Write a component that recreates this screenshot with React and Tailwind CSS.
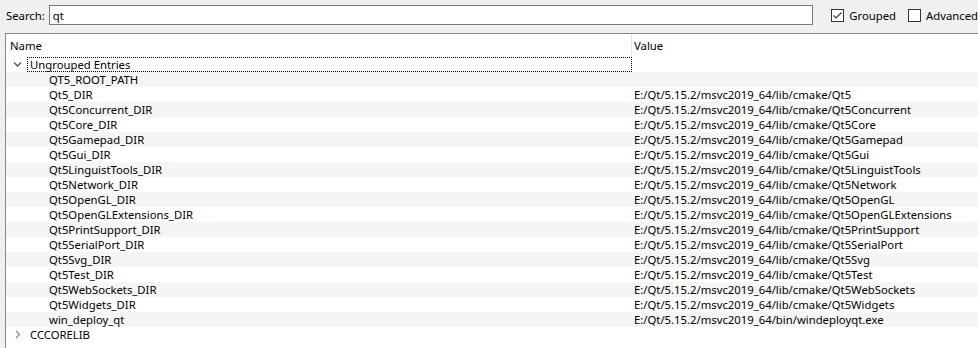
import React from 'react'

const entries = [
  ['QT5_ROOT_PATH', ''],
  ['Qt5_DIR', 'E:/Qt/5.15.2/msvc2019_64/lib/cmake/Qt5'],
  ['Qt5Concurrent_DIR', 'E:/Qt/5.15.2/msvc2019_64/lib/cmake/Qt5Concurrent'],
  ['Qt5Core_DIR', 'E:/Qt/5.15.2/msvc2019_64/lib/cmake/Qt5Core'],
  ['Qt5Gamepad_DIR', 'E:/Qt/5.15.2/msvc2019_64/lib/cmake/Qt5Gamepad'],
  ['Qt5Gui_DIR', 'E:/Qt/5.15.2/msvc2019_64/lib/cmake/Qt5Gui'],
  ['Qt5LinguistTools_DIR', 'E:/Qt/5.15.2/msvc2019_64/lib/cmake/Qt5LinguistTools'],
  ['Qt5Network_DIR', 'E:/Qt/5.15.2/msvc2019_64/lib/cmake/Qt5Network'],
  ['Qt5OpenGL_DIR', 'E:/Qt/5.15.2/msvc2019_64/lib/cmake/Qt5OpenGL'],
  ['Qt5OpenGLExtensions_DIR', 'E:/Qt/5.15.2/msvc2019_64/lib/cmake/Qt5OpenGLExtensions'],
  ['Qt5PrintSupport_DIR', 'E:/Qt/5.15.2/msvc2019_64/lib/cmake/Qt5PrintSupport'],
  ['Qt5SerialPort_DIR', 'E:/Qt/5.15.2/msvc2019_64/lib/cmake/Qt5SerialPort'],
  ['Qt5Svg_DIR', 'E:/Qt/5.15.2/msvc2019_64/lib/cmake/Qt5Svg'],
  ['Qt5Test_DIR', 'E:/Qt/5.15.2/msvc2019_64/lib/cmake/Qt5Test'],
  ['Qt5WebSockets_DIR', 'E:/Qt/5.15.2/msvc2019_64/lib/cmake/Qt5WebSockets'],
  ['Qt5Widgets_DIR', 'E:/Qt/5.15.2/msvc2019_64/lib/cmake/Qt5Widgets'],
  ['win_deploy_qt', 'E:/Qt/5.15.2/msvc2019_64/bin/windeployqt.exe'],
]

function Checkbox({ label, checked }) {
  return (
    <label className="flex items-center">
      <span className="flex h-[13px] w-[13px] items-center justify-center border border-[#333] bg-white">
        {checked && (
          <svg width="11" height="11" viewBox="0 0 11 11">
            <path d="M1.5 5.5 L4 8 L9.5 2.5" fill="none" stroke="#333" strokeWidth="1.1" />
          </svg>
        )}
      </span>
      <span className="ml-[5px]">{label}</span>
    </label>
  )
}

function Chevron({ open }) {
  return (
    <svg width="9" height="9" viewBox="0 0 9 9" className="shrink-0">
      {open ? (
        <path d="M1 2.5 L4.5 6 L8 2.5" fill="none" stroke="#555" strokeWidth="1.3" />
      ) : (
        <path d="M3 1 L6.5 4.5 L3 8" fill="none" stroke="#8a8a8a" strokeWidth="1.2" />
      )}
    </svg>
  )
}

export default function App() {
  return (
    <div className="flex h-[348px] w-[978px] flex-col overflow-hidden bg-[#f0f0f0] text-[11.3px] leading-[15px] text-black [font-family:'Noto_Sans',sans-serif]">
      <div className="flex h-[33px] shrink-0 items-start pt-[5px]">
        <span className="ml-[6px] flex h-[20px] items-center">Search:</span>
        <div className="ml-[4px] flex h-[20px] w-[770px] items-center border border-[#7a7a7a] bg-white pl-[3px]">
          qt
        </div>
        <div className="ml-[18px] flex h-[20px] items-center">
          <Checkbox label="Grouped" checked />
        </div>
        <div className="ml-[12px] flex h-[20px] items-center">
          <Checkbox label="Advanced" />
        </div>
      </div>

      <div className="ml-[5px] flex-1 border-l border-t border-[#828790] bg-white">
        <div className="flex h-[23px] items-center">
          <div className="w-[625px] pl-[4px]">Name</div>
          <div className="h-full w-px bg-[#e5e5e5]" />
          <div className="pl-[2px]">Value</div>
        </div>

        <div className="flex h-[15px] items-center">
          <div className="flex w-[21px] justify-center pl-[1px]">
            <Chevron open />
          </div>
          <div className="h-[15px] w-[605px] border border-dotted border-black pl-[2px] leading-[13px]">
            Ungrouped Entries
          </div>
        </div>

        {entries.map(([name, value], i) => (
          <div key={name} className={`flex h-[15px] items-center ${i % 2 === 0 ? 'bg-[#f5f5f5]' : 'bg-white'}`}>
            <div className="w-[626px] pl-[43px]">{name}</div>
            <div className="pl-[2px]">{value}</div>
          </div>
        ))}

        <div className="flex h-[15px] items-center">
          <div className="flex w-[21px] justify-center pl-[1px]">
            <Chevron />
          </div>
          <div className="pl-[3px]">CCCORELIB</div>
        </div>
      </div>
    </div>
  )
}
